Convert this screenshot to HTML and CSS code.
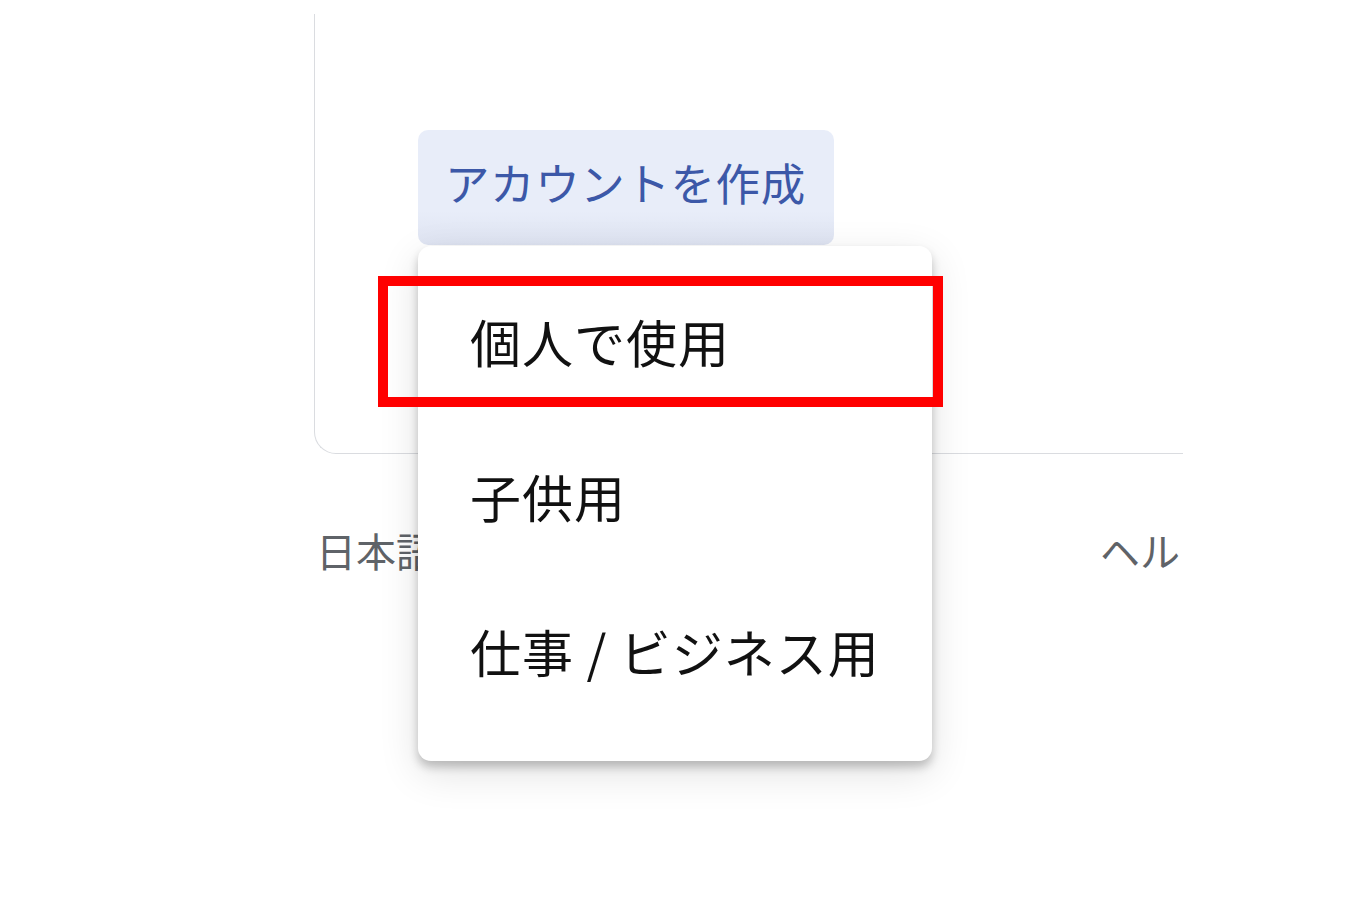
FILE: index.html
```html
<!DOCTYPE html>
<html lang="ja">
<head>
<meta charset="utf-8">
<title>アカウントを作成</title>
<link rel="stylesheet" href="styles.css">
</head>
<body>
<div class="frame">
  <div class="card">
    <button class="create-btn">アカウントを作成</button>
  </div>
  <div class="footer">
    <span class="lang">日本語</span>
    <span class="links">ヘルプ</span>
  </div>
  <ul class="menu">
    <li class="menu-item">個人で使用</li>
    <li class="menu-item">子供用</li>
    <li class="menu-item">仕事 / ビジネス用</li>
  </ul>
  <div class="highlight"></div>
</div>
</body>
</html>
```

FILE: styles.css
```css
html, body {
  margin: 0;
  padding: 0;
  background: #ffffff;
}
body {
  font-family: "Noto Sans CJK JP", "Noto Sans", sans-serif;
}
.frame {
  position: relative;
  margin: 14px 0 0 314px;
  width: 869px;
  height: 876px;
  overflow: hidden;
}
.card {
  box-sizing: border-box;
  height: 440px;
  border-left: 1px solid #dadce0;
  border-bottom: 1px solid #dadce0;
  border-bottom-left-radius: 22px;
  padding: 116px 0 0 103px;
}
.create-btn {
  box-sizing: border-box;
  display: flex;
  align-items: center;
  width: 416px;
  height: 115px;
  padding: 0 0 10px 27px;
  border: none;
  border-radius: 10px;
  background: linear-gradient(#e8edf9 70%, #dfe4f2 100%);
  color: #3c58a8;
  font-family: "Noto Sans CJK JP", "Noto Sans", sans-serif;
  font-size: 44.5px;
  line-height: 1;
  letter-spacing: 0.6px;
  white-space: nowrap;
}
.footer {
  display: grid;
  grid-template-columns: 784px auto;
  padding-left: 2px;
  margin-top: 76px;
  color: #5f6368;
  font-size: 40px;
  line-height: 40px;
  white-space: nowrap;
}
.menu {
  position: absolute;
  left: 104px;
  top: 232px;
  box-sizing: border-box;
  width: 514px;
  height: 515px;
  margin: 0;
  padding: 18px 0 0 52px;
  list-style: none;
  background: #ffffff;
  border-radius: 13px;
  box-shadow: 0 6px 10px rgba(0, 0, 0, 0.22), 0 12px 40px rgba(0, 0, 0, 0.12);
}
.menu-item {
  height: 155px;
  display: flex;
  align-items: center;
  color: #111111;
  font-size: 51px;
  line-height: 1;
  letter-spacing: 1px;
  white-space: nowrap;
}
.highlight {
  position: absolute;
  left: 64px;
  top: 262px;
  box-sizing: border-box;
  width: 565px;
  height: 131px;
  border: 10px solid #ff0000;
}
```
